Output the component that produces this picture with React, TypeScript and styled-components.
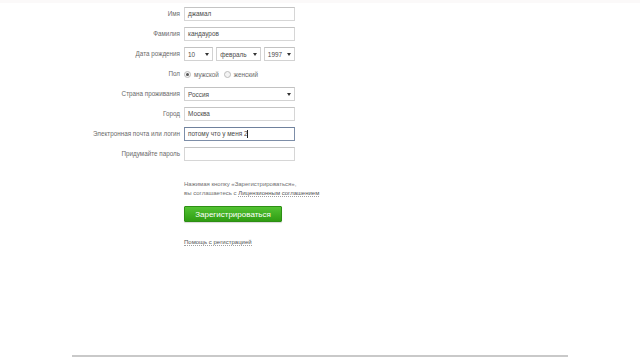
import React from 'react';
import styled, { createGlobalStyle } from 'styled-components';

const GlobalStyle = createGlobalStyle`
  html, body {
    margin: 0;
    padding: 0;
    background: #ffffff;
    font-family: "Liberation Sans", Arial, sans-serif;
  }
`;

const Page = styled.div`
  width: 640px;
  height: 360px;
  overflow: hidden;
  display: flex;
  flex-direction: column;
  background: #ffffff;
`;

const TopStrip = styled.div`
  height: 3px;
  background: #fbf9f9;
`;

const Form = styled.div`
  display: grid;
  grid-template-columns: 180px 111px;
  grid-auto-rows: 14px;
  column-gap: 4px;
  row-gap: 6px;
  margin-top: 4px;
`;

const Label = styled.div`
  font-size: 6.3px;
  color: #6a6a6a;
  text-align: right;
  line-height: 14px;
  white-space: nowrap;
`;

const Input = styled.div<{ $focused?: boolean }>`
  box-sizing: border-box;
  height: 14px;
  border: 1px solid ${({ $focused }) => ($focused ? '#7d8ea8' : '#d6d6d6')};
  border-top-color: ${({ $focused }) => ($focused ? '#6f819c' : '#c4c4c4')};
  font-size: 6.4px;
  color: #4a4a4a;
  line-height: 12px;
  padding-left: 3px;
  display: flex;
  align-items: center;
`;

const Caret = styled.span`
  display: inline-block;
  width: 1px;
  height: 8px;
  background: #222222;
`;

const SelectRow = styled.div`
  display: flex;
  gap: 3px;
`;

const Select = styled.div<{ $w: number }>`
  box-sizing: border-box;
  width: ${({ $w }) => $w}px;
  height: 14px;
  border: 1px solid #d2d2d2;
  border-top-color: #c2c2c2;
  font-size: 6.4px;
  color: #4a4a4a;
  display: flex;
  align-items: center;
  justify-content: space-between;
  padding: 0 3px;
`;

const Arrow = styled.span`
  width: 0;
  height: 0;
  border-left: 2px solid transparent;
  border-right: 2px solid transparent;
  border-top: 3px solid #333333;
`;

const RadioGroup = styled.div`
  display: flex;
  align-items: center;
  font-size: 6.3px;
  color: #6a6a6a;
`;

const Radio = styled.span<{ $checked?: boolean }>`
  box-sizing: border-box;
  width: 7px;
  height: 7px;
  border-radius: 50%;
  border: 1px solid #bcbcbc;
  background: #f4f4f4;
  margin: 0 3px 0 0;
  display: flex;
  align-items: center;
  justify-content: center;
  &::after {
    content: '';
    width: 3px;
    height: 3px;
    border-radius: 50%;
    background: ${({ $checked }) => ($checked ? '#555555' : 'transparent')};
  }
`;

const RadioText = styled.span`
  margin-right: 5px;
`;

const Bottom = styled.div`
  margin-left: 184px;
  margin-top: 19px;
  display: flex;
  flex-direction: column;
  align-items: flex-start;
`;

const Agreement = styled.div`
  font-size: 6px;
  line-height: 9px;
  color: #707070;
`;

const DottedLink = styled.span`
  color: #555555;
  border-bottom: 1px dotted #a0a0a0;
`;

const Button = styled.div`
  margin-top: 8px;
  width: 98px;
  height: 16px;
  border-radius: 1px;
  background: linear-gradient(#52c232, #2f9d13);
  border: 1px solid #2d8f14;
  box-sizing: border-box;
  color: #ffffff;
  font-size: 8px;
  display: flex;
  align-items: center;
  justify-content: center;
  box-shadow: 0 1px 1px rgba(0, 0, 0, 0.15);
`;

const Help = styled.div`
  margin-top: 17px;
  font-size: 6px;
  color: #666666;
`;

const Spacer = styled.div`
  flex: 1;
`;

const FooterLine = styled.div`
  margin: 0 0 3px 72px;
  width: 496px;
  height: 2px;
  background: #c9c9c9;
`;

export default function App() {
  return (
    <Page>
      <GlobalStyle />
      <TopStrip />
      <Form>
        <Label>Имя</Label>
        <Input>джамал</Input>

        <Label>Фамилия</Label>
        <Input>кандауров</Input>

        <Label>Дата рождения</Label>
        <SelectRow>
          <Select $w={30}>10<Arrow /></Select>
          <Select $w={46}>февраль<Arrow /></Select>
          <Select $w={32}>1997<Arrow /></Select>
        </SelectRow>

        <Label>Пол</Label>
        <RadioGroup>
          <Radio $checked />
          <RadioText>мужской</RadioText>
          <Radio />
          <RadioText>женский</RadioText>
        </RadioGroup>

        <Label>Страна проживания</Label>
        <Select $w={111}>Россия<Arrow /></Select>

        <Label>Город</Label>
        <Input>Москва</Input>

        <Label>Электронная почта или логин</Label>
        <Input $focused>потому что у меня 2<Caret /></Input>

        <Label>Придумайте пароль</Label>
        <Input />
      </Form>
      <Bottom>
        <Agreement>
          Нажимая кнопку «Зарегистрироваться»,
          <br />
          вы соглашаетесь с <DottedLink>Лицензионным соглашением</DottedLink>
        </Agreement>
        <Button>Зарегистрироваться</Button>
        <Help>
          <DottedLink>Помощь с регистрацией</DottedLink>
        </Help>
      </Bottom>
      <Spacer />
      <FooterLine />
    </Page>
  );
}
